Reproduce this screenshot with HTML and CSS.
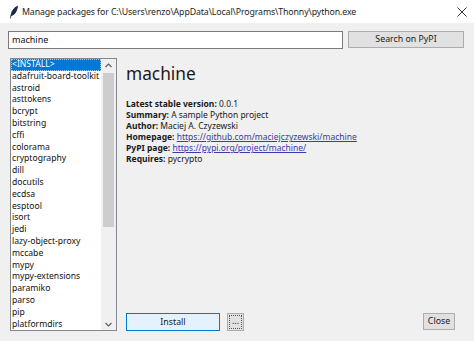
FILE: index.html
```html
<!DOCTYPE html>
<html>
<head>
<meta charset="utf-8">
<link rel="stylesheet" href="styles.css">
</head>
<body>
<div class="window">
  <div class="titlebar">
    <svg class="app-icon" width="10" height="14" viewBox="0 0 10 14">
      <path d="M9 0.5 C5 2 2.5 5.5 1.6 10 L1 13.5 L1.6 13.6 L2.4 11 C6 10 8.6 6 9 0.5 Z" fill="#1c2a4a"/>
    </svg>
    <span class="title">Manage packages for C:\Users\renzo\AppData\Local\Programs\Thonny\python.exe</span>
    <svg class="close-x" width="10" height="10" viewBox="0 0 10 10">
      <path d="M0.5 0.5 L9.5 9.5 M9.5 0.5 L0.5 9.5" stroke="#333" stroke-width="1"/>
    </svg>
  </div>
  <div class="body">
    <div class="search-row">
      <div class="entry">machine</div>
      <div class="btn search-btn">Search on PyPI</div>
    </div>
    <div class="content">
      <div class="listbox">
        <ul class="items">
          <li class="selected">&lt;INSTALL&gt;</li>
          <li>adafruit-board-toolkit</li>
          <li>astroid</li>
          <li>asttokens</li>
          <li>bcrypt</li>
          <li>bitstring</li>
          <li>cffi</li>
          <li>colorama</li>
          <li>cryptography</li>
          <li>dill</li>
          <li>docutils</li>
          <li>ecdsa</li>
          <li>esptool</li>
          <li>isort</li>
          <li>jedi</li>
          <li>lazy-object-proxy</li>
          <li>mccabe</li>
          <li>mypy</li>
          <li>mypy-extensions</li>
          <li>paramiko</li>
          <li>parso</li>
          <li>pip</li>
          <li>platformdirs</li>
        </ul>
        <div class="scrollbar">
          <svg class="arrow" width="7" height="5" viewBox="0 0 7 5"><path d="M0.5 4 L3.5 1 L6.5 4" fill="none" stroke="#606060" stroke-width="1.2"/></svg>
          <div class="track"><div class="thumb"></div></div>
          <svg class="arrow" width="7" height="5" viewBox="0 0 7 5"><path d="M0.5 1 L3.5 4 L6.5 1" fill="none" stroke="#606060" stroke-width="1.2"/></svg>
        </div>
      </div>
      <div class="right">
        <div class="info">
          <h1 class="pkg-name">machine</h1>
          <div class="meta">
            <div><b>Latest stable version:</b> 0.0.1</div>
            <div><b>Summary:</b> A sample Python project</div>
            <div><b>Author:</b> Maciej A. Czyzewski</div>
            <div><b>Homepage:</b> <a>https://github.com/maciejczyzewski/machine</a></div>
            <div><b>PyPI page:</b> <a>https://pypi.org/project/machine/</a></div>
            <div><b>Requires:</b> pycrypto</div>
          </div>
        </div>
        <div class="buttons">
          <div class="btn install-btn">Install</div>
          <div class="btn dots-btn">...</div>
          <div class="spacer"></div>
          <div class="btn close-btn">Close</div>
        </div>
      </div>
    </div>
  </div>
</div>
</body>
</html>
```
FILE: styles.css
```css
* { box-sizing: border-box; }
html, body {
  margin: 0;
  padding: 0;
  width: 474px;
  height: 341px;
  overflow: hidden;
  background: #f0f0f0;
  font-family: "Noto Sans", "Open Sans", sans-serif;
  color: #1a1a1a;
}
.window {
  width: 474px;
  height: 341px;
  display: flex;
  flex-direction: column;
}
.titlebar {
  height: 23px;
  background: #ffffff;
  display: flex;
  align-items: center;
  padding-left: 9px;
  padding-right: 7px;
  flex: none;
}
.app-icon { flex: none; }
.title {
  margin-left: 3px;
  font-size: 8.8px;
  letter-spacing: -0.12px;
  color: #1e1e1e;
  white-space: nowrap;
  flex: 1;
}
.close-x { flex: none; margin-right: 0; }
.body {
  flex: 1;
  display: flex;
  flex-direction: column;
  padding: 8px 10px 10px 8px;
}
.search-row {
  display: flex;
  align-items: flex-start;
  gap: 5px;
  height: 18px;
}
.entry {
  flex: 1;
  height: 18px;
  background: #ffffff;
  border: 1px solid #7a7a7a;
  font-size: 9px;
  line-height: 16px;
  padding-left: 3px;
  color: #111;
}
.btn {
  background: #e1e1e1;
  border: 1px solid #adadad;
  font-size: 8.8px;
  text-align: center;
  color: #1a1a1a;
  white-space: nowrap;
}
.search-btn {
  width: 116px;
  height: 17px;
  line-height: 15px;
}
.content {
  flex: 1;
  display: flex;
  margin-top: 9px;
  gap: 9px;
}
.listbox {
  margin-left: 2px;
  width: 107px;
  height: 273px;
  background: #ffffff;
  border: 1px solid #828790;
  display: flex;
  flex: none;
}
.items {
  list-style: none;
  margin: 0;
  padding: 0;
  width: 90px;
  overflow: hidden;
  flex: none;
}
.items li {
  height: 11.8px;
  line-height: 11.8px;
  font-size: 8.6px;
  padding-left: 1px;
  white-space: nowrap;
  color: #111;
}
.items li.selected {
  background: #0078d7;
  color: #ffffff;
  outline: 1px dotted #9ec9f0;
  outline-offset: -1px;
}
.scrollbar {
  flex: 1;
  background: #f0f0f0;
  display: flex;
  flex-direction: column;
  align-items: center;
  padding: 4px 0 3px;
}
.arrow { flex: none; }
.track {
  flex: 1;
  width: 100%;
  padding: 5px 2px 0;
}
.thumb {
  height: 154px;
  background: #cdcdcd;
}
.right {
  flex: 1;
  display: flex;
  flex-direction: column;
}
.info {
  flex: 1;
}
.pkg-name {
  margin: 5px 0 0;
  font-size: 17.3px;
  font-weight: normal;
  line-height: 21px;
  color: #1a1a1a;
}
.meta {
  margin-top: 14px;
  font-size: 8.5px;
  line-height: 11.1px;
  color: #1a1a1a;
}
.meta b { font-weight: bold; }
.meta a {
  color: #3a3aa8;
  text-decoration: underline;
}
.buttons {
  display: flex;
  align-items: flex-start;
  height: 18px;
  margin-bottom: 0;
}
.install-btn {
  width: 94px;
  height: 18px;
  line-height: 16px;
  background: #e5f1fb;
  border-color: #0078d7;
}
.dots-btn {
  margin-left: 7px;
  width: 17px;
  height: 18px;
  line-height: 14px;
  outline: 1px dotted #555;
  outline-offset: -3px;
}
.spacer { flex: 1; }
.close-btn {
  width: 32px;
  height: 17px;
  line-height: 15px;
  margin-right: 9px;
}
```
